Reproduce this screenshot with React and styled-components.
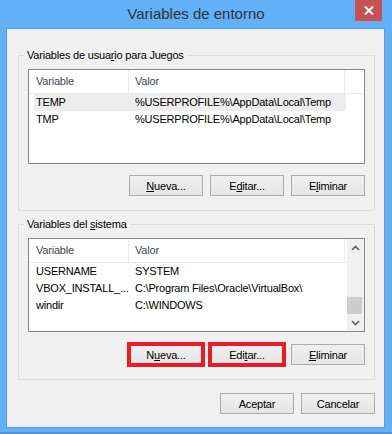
import React from 'react';
import styled, { createGlobalStyle } from 'styled-components';

const userVars = [
  { name: 'TEMP', value: '%USERPROFILE%\\AppData\\Local\\Temp', selected: true },
  { name: 'TMP', value: '%USERPROFILE%\\AppData\\Local\\Temp' },
];

// the list shows the long name already shortened, as the dialog does
const systemVars = [
  { name: 'USERNAME', value: 'SYSTEM' },
  { name: 'VBOX_INSTALL_...', value: 'C:\\Program Files\\Oracle\\VirtualBox\\' },
  { name: 'windir', value: 'C:\\WINDOWS' },
];

export default function App() {
  return (
    <>
      <GlobalStyle />
      <Window>
        <TitleBar>
          <span />
          <Title>Variables de entorno</Title>
          <CloseButton aria-label="Cerrar">
            <svg width="10" height="9" viewBox="0 0 10 9">
              <path d="M1 0.5 L9 8.5 M9 0.5 L1 8.5" stroke="#fff" strokeWidth="2" />
            </svg>
          </CloseButton>
        </TitleBar>

        <Body>
          <Group>
            <Legend>
              Variables de usua<Key>r</Key>io para Juegos
            </Legend>
            <VarList rows={userVars} height={95} />
            <ButtonRow $top={11}>
              <Button><Key>N</Key>ueva...</Button>
              <Button>E<Key>d</Key>itar...</Button>
              <Button>E<Key>l</Key>iminar</Button>
            </ButtonRow>
          </Group>

          <Group $top={6}>
            <Legend>
              Variables del <Key>s</Key>istema
            </Legend>
            <VarList rows={systemVars} height={94} scroll />
            <ButtonRow $top={12}>
              <Button $marked>N<Key>u</Key>eva...</Button>
              <Button $marked>Edi<Key>t</Key>ar...</Button>
              <Button><Key>E</Key>liminar</Button>
            </ButtonRow>
          </Group>

          <ButtonRow $top={13}>
            <Button>Aceptar</Button>
            <Button>Cancelar</Button>
          </ButtonRow>
        </Body>
      </Window>
    </>
  );
}

function VarList({ rows, height, scroll }) {
  return (
    <List style={{ height }}>
      <ListMain>
        <Header>
          <HeaderCell $width={100} $pad={7}>Variable</HeaderCell>
          <HeaderCell $width={216} $pad={6}>Valor</HeaderCell>
          <HeaderFill />
        </Header>
        {rows.map((r) => (
          <Row key={r.name} $selected={r.selected}>
            <Cell $pad={2}>{r.name}</Cell>
            <Cell $pad={4}>{r.value}</Cell>
          </Row>
        ))}
      </ListMain>
      {scroll && (
        <ScrollBar>
          <ScrollArrow>
            <svg width="9" height="6" viewBox="0 0 9 6">
              <polyline points="1,5 4.5,1.5 8,5" fill="none" stroke="#606060" strokeWidth="1.6" />
            </svg>
          </ScrollArrow>
          <Track>
            <Thumb />
          </Track>
          <ScrollArrow>
            <svg width="9" height="6" viewBox="0 0 9 6">
              <polyline points="1,1 4.5,4.5 8,1" fill="none" stroke="#606060" strokeWidth="1.6" />
            </svg>
          </ScrollArrow>
        </ScrollBar>
      )}
    </List>
  );
}

const GlobalStyle = createGlobalStyle`
  html, body {
    margin: 0;
    padding: 0;
  }

  body {
    width: 392px;
    height: 434px;
    overflow: hidden;
    background: #62b0f8;
    font-family: 'Liberation Sans', Arial, sans-serif;
  }
`;

const Window = styled.div`
  width: 392px;
  height: 434px;
  box-sizing: border-box;
  display: flex;
  flex-direction: column;
  background: #62b0f8;
  padding-bottom: 4px;
  border-bottom: 2px solid #4f93d6;
`;

const TitleBar = styled.div`
  height: 28px;
  flex-shrink: 0;
  display: grid;
  grid-template-columns: 1fr auto 1fr;
  padding: 0 10px;
`;

const Title = styled.div`
  font-size: 15px;
  line-height: 27px;
  color: #333;
`;

const CloseButton = styled.div`
  justify-self: end;
  width: 27px;
  height: 21px;
  background: #c75050;
  display: flex;
  align-items: center;
  justify-content: center;
`;

const Body = styled.div`
  flex: 1;
  margin: 0 7px 0 6px;
  border: 1px solid #5a9de0;
  background: #f0f0f0;
  padding: 19px 9px 13px 11px;
  display: flex;
  flex-direction: column;
  font-size: 11px;
  letter-spacing: -0.2px;
  color: #000;
`;

const Group = styled.fieldset`
  margin: ${(p) => p.$top || 0}px 0 0;
  min-inline-size: 0;
  border: 1px solid #dcdcdc;
  padding: 7px 9px 14px;
`;

const Legend = styled.legend`
  margin-left: -4px;
  padding: 0 3px;
  line-height: 14px;
`;

const Key = styled.span`
  text-decoration: underline;
  text-underline-offset: 1px;
`;

const List = styled.div`
  box-sizing: border-box;
  border: 1px solid #828790;
  background: #fff;
  display: flex;
`;

const ListMain = styled.div`
  flex: 1;
  min-width: 0;
  display: flex;
  flex-direction: column;
`;

const Header = styled.div`
  height: 24px;
  flex-shrink: 0;
  box-sizing: border-box;
  display: flex;
  border-bottom: 1px solid #e5ecf6;
`;

const HeaderCell = styled.div`
  width: ${(p) => p.$width}px;
  box-sizing: border-box;
  padding-left: ${(p) => p.$pad}px;
  border-right: 1px solid #e5ecf6;
  line-height: 23px;
  color: #3c4656;
`;

const HeaderFill = styled.div`
  flex: 1;
`;

const Row = styled.div`
  margin-left: 5px;
  width: 312px;
  height: 17px;
  display: grid;
  grid-template-columns: 97px 215px;
  background: ${(p) => (p.$selected ? '#ededed' : 'transparent')};
`;

const Cell = styled.div`
  padding-left: ${(p) => p.$pad}px;
  line-height: 17px;
  white-space: nowrap;
`;

const ScrollBar = styled.div`
  width: 17px;
  flex-shrink: 0;
  background: #f0f0f0;
  display: flex;
  flex-direction: column;
`;

const ScrollArrow = styled.div`
  height: 17px;
  display: flex;
  align-items: center;
  justify-content: center;
`;

const Track = styled.div`
  flex: 1;
  display: flex;
  flex-direction: column;
  justify-content: flex-end;
`;

const Thumb = styled.div`
  height: 17px;
  margin-right: 2px;
  background: #cdcdcd;
`;

const ButtonRow = styled.div`
  margin-top: ${(p) => p.$top}px;
  display: flex;
  justify-content: flex-end;
  gap: 7px;
`;

const Button = styled.button`
  width: 74px;
  height: 21px;
  box-sizing: border-box;
  padding: 0;
  border: 1px solid #acacac;
  border-radius: 0;
  background: linear-gradient(#f0f0f0, #e5e5e5);
  font-family: 'Liberation Sans', Arial, sans-serif;
  font-size: 11px;
  letter-spacing: -0.2px;
  color: #000;
  outline: ${(p) => (p.$marked ? '4px solid #ed1c24' : 'none')};
  outline-offset: -2px;
`;
